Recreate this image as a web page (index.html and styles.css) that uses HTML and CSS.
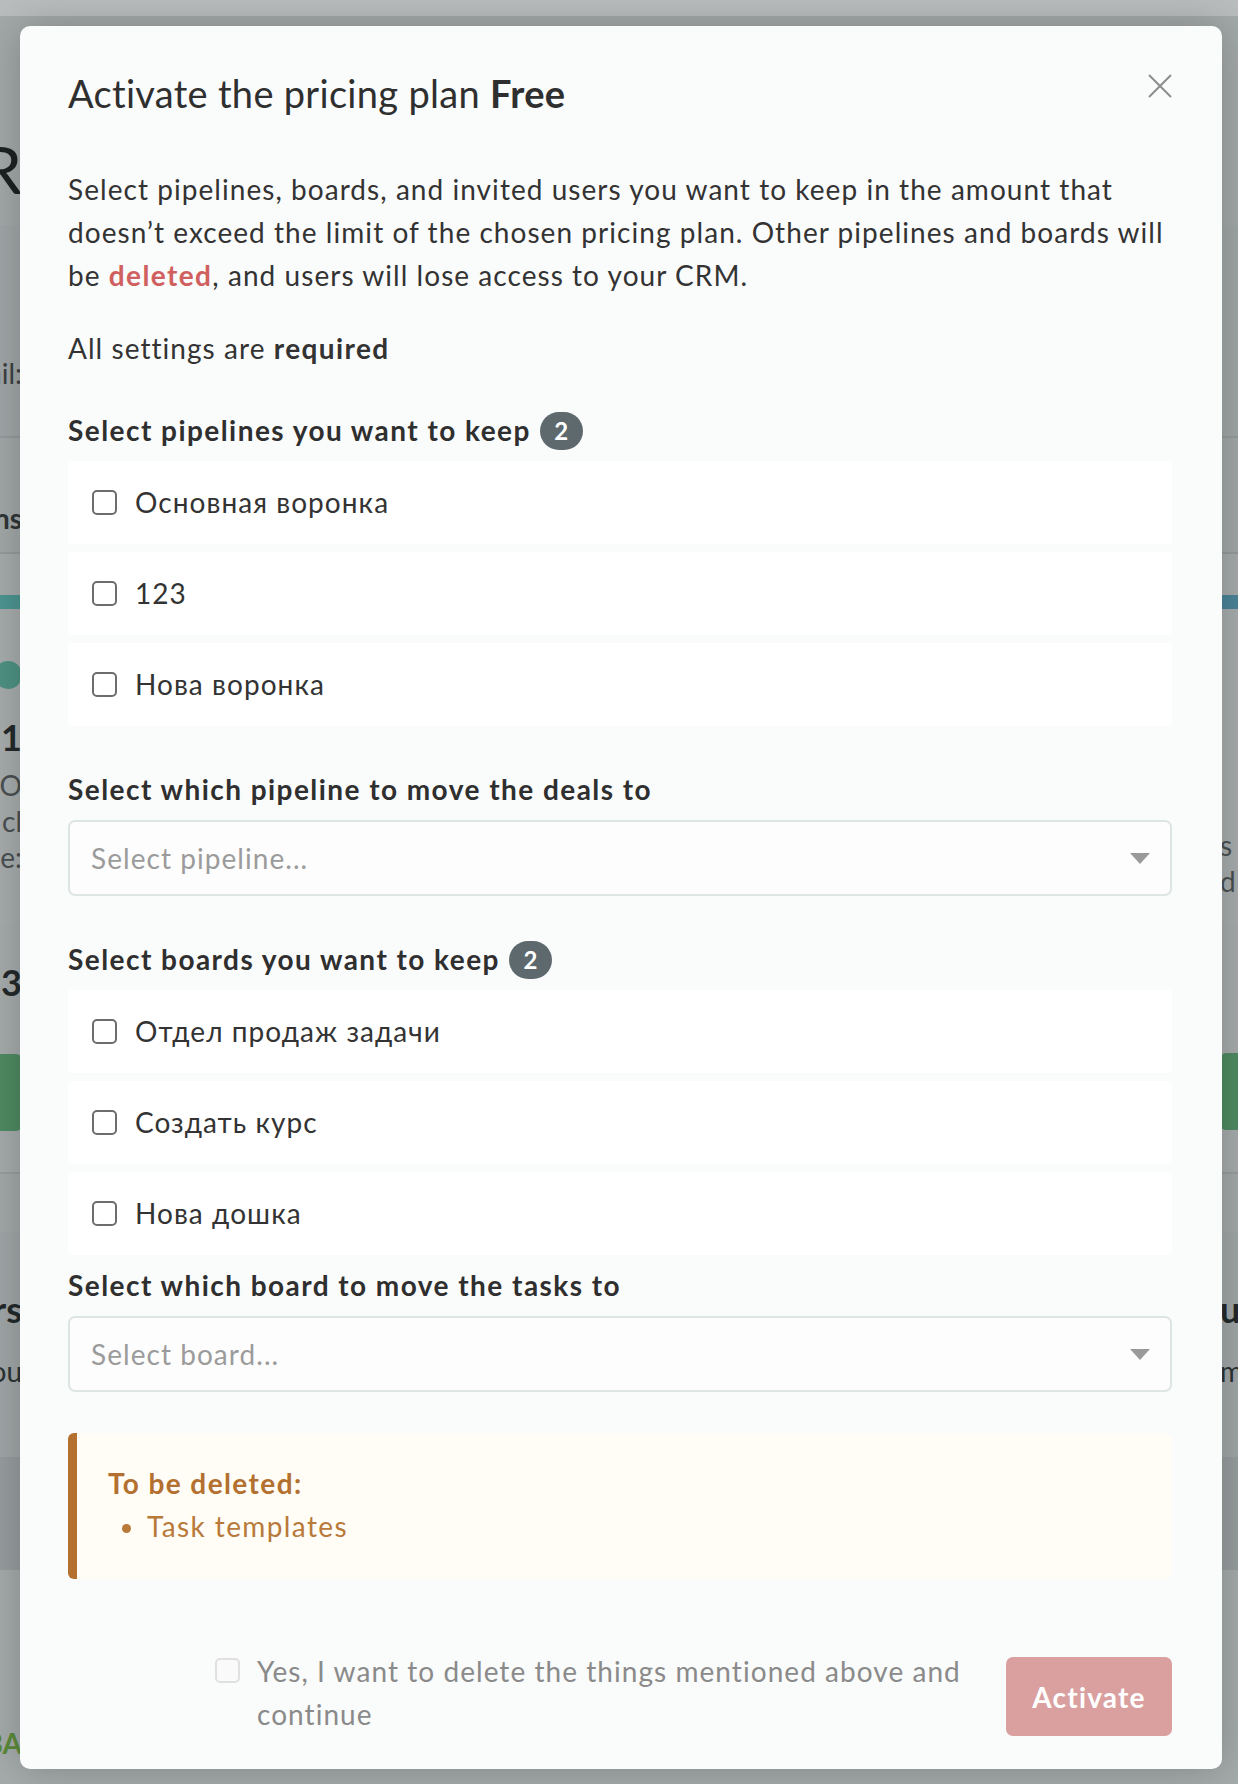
FILE: index.html
```html
<!DOCTYPE html>
<html lang="en">
<head>
    <meta charset="UTF-8">
    <meta name="viewport" content="width=device-width, initial-scale=1.0">
    <title>Activate the pricing plan</title>
    <link rel="stylesheet" href="styles.css">
</head>
<body>
    <!-- page under the overlay, only its edges are visible -->
    <div class="page">
        <div class="bg-top"></div>
        <div class="bg-band bg-head">
            <span class="edge-left big-letter">CR</span>
        </div>
        <div class="bg-band bg-info">
            <span class="edge-left">Email:</span>
        </div>
        <div class="bg-band bg-tabs">
            <span class="edge-left">Plans</span>
        </div>
        <div class="bg-band bg-gap"></div>
        <div class="bg-bar"></div>
        <div class="bg-band bg-card">
            <div class="edge-left stack">
                <span class="bg-icon"></span>
                <b class="bg-num">1</b>
                <span>O</span>
                <span>cl</span>
                <span>e:</span>
            </div>
            <div class="edge-right stack">
                <span>s</span>
                <span>d</span>
            </div>
        </div>
        <div class="bg-band bg-price">
            <div class="edge-left stack">
                <b class="bg-num">3</b>
                <span class="bg-btn"></span>
            </div>
            <div class="edge-right stack">
                <span class="bg-btn"></span>
            </div>
        </div>
        <div class="bg-band bg-line"></div>
        <div class="bg-band bg-users">
            <div class="edge-left stack">
                <b class="bg-num">rs</b>
                <span>ou</span>
            </div>
            <div class="edge-right stack right-text">
                <b class="bg-num">ur</b>
                <span>m</span>
            </div>
        </div>
        <div class="bg-band bg-dark"></div>
        <div class="bg-band bg-bottom">
            <span class="edge-left bg-green">BA</span>
        </div>
    </div>

    <div class="backdrop">
        <div class="modal">
            <header class="modal-header">
                <h2>Activate the pricing plan <b>Free</b></h2>
                <button class="close" type="button" aria-label="Close">
                    <svg width="26" height="26" viewBox="0 0 26 26">
                        <path d="M2 2 L24 24 M24 2 L2 24" stroke="#8c8c8c" stroke-width="2" fill="none"/>
                    </svg>
                </button>
            </header>

            <div class="modal-body">
                <p class="intro">Select pipelines, boards, and invited users you want to keep in the amount that doesn’t exceed the limit of the chosen pricing plan. Other pipelines and boards will be <b class="danger">deleted</b>, and users will lose access to your CRM.</p>
                <p class="note">All settings are <b>required</b></p>

                <h3 class="group-title first">Select pipelines you want to keep <span class="badge">2</span></h3>
                <div class="options">
                    <label class="option"><span class="box"></span>Основная воронка</label>
                    <label class="option"><span class="box"></span>123</label>
                    <label class="option"><span class="box"></span>Нова воронка</label>
                </div>

                <h3 class="group-title">Select which pipeline to move the deals to</h3>
                <div class="select">
                    <span>Select pipeline...</span>
                    <span class="caret"></span>
                </div>

                <h3 class="group-title">Select boards you want to keep <span class="badge">2</span></h3>
                <div class="options">
                    <label class="option"><span class="box"></span>Отдел продаж задачи</label>
                    <label class="option"><span class="box"></span>Создать курс</label>
                    <label class="option"><span class="box"></span>Нова дошка</label>
                </div>

                <h3 class="group-title tight">Select which board to move the tasks to</h3>
                <div class="select">
                    <span>Select board...</span>
                    <span class="caret"></span>
                </div>

                <div class="warning">
                    <strong>To be deleted:</strong>
                    <ul>
                        <li>Task templates</li>
                    </ul>
                </div>
            </div>

            <footer class="modal-footer">
                <label class="confirm">
                    <span class="box box-disabled"></span>
                    <span class="confirm-text">Yes, I want to delete the things mentioned above and continue</span>
                </label>
                <button class="activate" type="button">Activate</button>
            </footer>
        </div>
    </div>
</body>
</html>
```

FILE: styles.css
```css
body {
    margin: 0;
    font-family: 'Lato', 'Open Sans', sans-serif;
    color: #333;
    overflow: hidden;
}

/* ---------- page behind the overlay ---------- */
.page {
    height: 1784px;
    background-color: #a3a8a9;
    display: flex;
    flex-direction: column;
    color: #2f3536;
    font-size: 28px;
    line-height: 36px;
}

.bg-top {
    height: 16px;
    background-color: #b9bdbe;
}

.bg-band {
    display: flex;
    justify-content: space-between;
    align-items: flex-start;
    box-sizing: border-box;
}

.edge-left,
.edge-right {
    width: 22px;
    overflow: hidden;
    display: flex;
    justify-content: flex-end;
    white-space: nowrap;
}

.edge-right {
    justify-content: flex-start;
    width: 18px;
}

.stack {
    flex-direction: column;
    align-items: flex-end;
}

.edge-right.stack {
    align-items: flex-start;
}

.big-letter {
    font-size: 66px;
    line-height: 66px;
    color: #1d2122;
}

.bg-head {
    height: 209px;
    padding-top: 120px;
}

.bg-info {
    height: 211px;
    padding-top: 130px;
    background-color: #a0a6a7;
    color: #3b4142;
}

.bg-tabs {
    height: 118px;
    padding-top: 62px;
    background-color: #a2a7a8;
    border-top: 2px solid #959b9c;
    border-bottom: 2px solid #959b9c;
    font-weight: bold;
}

.bg-gap {
    height: 41px;
    background-color: #a6abac;
}

.bg-bar {
    height: 14px;
    background: linear-gradient(90deg, #4d9591, #4a8498);
}

.bg-card {
    height: 315px;
    padding-top: 52px;
    background-color: #a7acad;
    color: #4a5051;
}

.bg-card .edge-right {
    padding-top: 166px;
}

.bg-icon {
    width: 28px;
    height: 28px;
    border-radius: 50%;
    background-color: #4e9283;
    margin-bottom: 26px;
    flex-shrink: 0;
}

.bg-num {
    font-size: 36px;
    line-height: 44px;
    color: #23292a;
    margin-bottom: 8px;
}

.bg-price {
    height: 248px;
    padding-top: 36px;
    background-color: #a6abac;
}

.bg-price .edge-right {
    padding-top: 93px;
}

.bg-btn {
    width: 40px;
    height: 77px;
    margin-top: 42px;
    border-radius: 6px;
    background-color: #4e8b62;
    flex-shrink: 0;
}

.bg-price .edge-right .bg-btn {
    margin-top: 0;
}

.bg-line {
    height: 60px;
    background-color: #a3a8a9;
    border-top: 2px solid #979d9e;
}

.bg-users {
    height: 225px;
    padding-top: 55px;
    background-color: #a0a6a7;
    color: #2c3233;
}

.bg-users .bg-num {
    margin-bottom: 22px;
}

.bg-dark {
    height: 113px;
    background-color: #979d9e;
}

.bg-bottom {
    flex: 1;
    padding-top: 155px;
    background-color: #a5aaab;
}

.bg-green {
    color: #5a8a3a;
    font-weight: bold;
}

/* ---------- modal ---------- */
.backdrop {
    position: absolute;
    top: 0;
    left: 0;
    right: 0;
    bottom: 0;
    padding: 26px 16px 15px 20px;
}

.modal {
    height: 1743px;
    box-sizing: border-box;
    padding: 44px 50px 33px 48px;
    background-color: #fafbfb;
    border-radius: 10px;
    box-shadow: 0 0 40px rgba(0, 0, 0, 0.22);
    display: flex;
    flex-direction: column;
}

.modal-header {
    display: flex;
    justify-content: space-between;
    align-items: flex-start;
}

.modal-header h2 {
    margin: 0;
    font-size: 38px;
    line-height: 46px;
    font-weight: normal;
    letter-spacing: 0.3px;
    color: #2f2f2f;
}

.close {
    border: none;
    background: none;
    padding: 0;
    margin-top: 3px;
    margin-right: -1px;
    width: 26px;
    height: 26px;
    cursor: pointer;
}

.close svg {
    display: block;
}

.modal-body {
    padding-top: 52px;
    font-size: 28px;
    line-height: 43px;
    letter-spacing: 1.05px;
}

.modal-body p {
    margin: 0;
}

.modal-body b,
.modal-body strong {
    letter-spacing: 1.4px;
}

.intro {
    margin-bottom: 30px !important;
}

.danger {
    color: #d0605f;
}

.group-title {
    margin: 42px 0 9px;
    font-size: 28px;
    line-height: 43px;
    font-weight: bold;
    letter-spacing: 1.45px;
    color: #2f2f2f;
    display: flex;
    align-items: center;
}

.group-title.first {
    margin-top: 39px;
}

.group-title.tight {
    margin-top: 9px;
}

.badge {
    display: inline-flex;
    align-items: center;
    justify-content: center;
    width: 43px;
    height: 38px;
    margin-left: 9px;
    border-radius: 19px;
    background-color: #5e696e;
    color: white;
    font-size: 24px;
    letter-spacing: 0;
}

.options {
    display: flex;
    flex-direction: column;
    gap: 8px;
}

.option {
    height: 83px;
    padding: 0 24px;
    display: flex;
    align-items: center;
    gap: 18px;
    background-color: white;
    border-radius: 4px;
    letter-spacing: 1.05px;
    cursor: pointer;
}

.box {
    width: 21px;
    height: 21px;
    border: 2px solid #6d6d6d;
    border-radius: 5px;
    background: white;
    flex-shrink: 0;
}

.select {
    height: 76px;
    box-sizing: border-box;
    padding: 0 20px 0 21px;
    border: 2px solid #dde5e5;
    border-radius: 7px;
    background-color: #fdfdfd;
    display: flex;
    justify-content: space-between;
    align-items: center;
    color: #9b9b9b;
}

.caret {
    width: 0;
    height: 0;
    border-left: 10px solid transparent;
    border-right: 10px solid transparent;
    border-top: 11px solid #9a9a9a;
}

.warning {
    margin-top: 41px;
    padding: 29px 30px 31px 31px;
    background-color: #fffdf6;
    border-left: 9px solid #b3702f;
    border-radius: 6px;
    color: #b8793a;
    letter-spacing: 1.4px;
}

.warning strong {
    color: #b3702f;
}

.warning ul {
    margin: 0;
    padding-left: 39px;
}

/* ---------- footer ---------- */
.modal-footer {
    margin-top: auto;
    display: flex;
    justify-content: flex-end;
    align-items: flex-start;
    gap: 19px;
}

.confirm {
    display: flex;
    align-items: flex-start;
    gap: 17px;
    font-size: 28px;
    line-height: 43px;
    letter-spacing: 1.05px;
    color: #8a8a8a;
}

.box-disabled {
    margin-top: 8px;
    border-color: #e0e0e0;
    background: #fafafa;
}

.confirm-text {
    width: 730px;
}

.activate {
    margin-top: 7px;
    width: 166px;
    height: 79px;
    border: none;
    border-radius: 7px;
    background-color: #d9a09f;
    color: white;
    font-family: inherit;
    font-size: 28px;
    font-weight: bold;
    letter-spacing: 1.2px;
    cursor: pointer;
}
```
